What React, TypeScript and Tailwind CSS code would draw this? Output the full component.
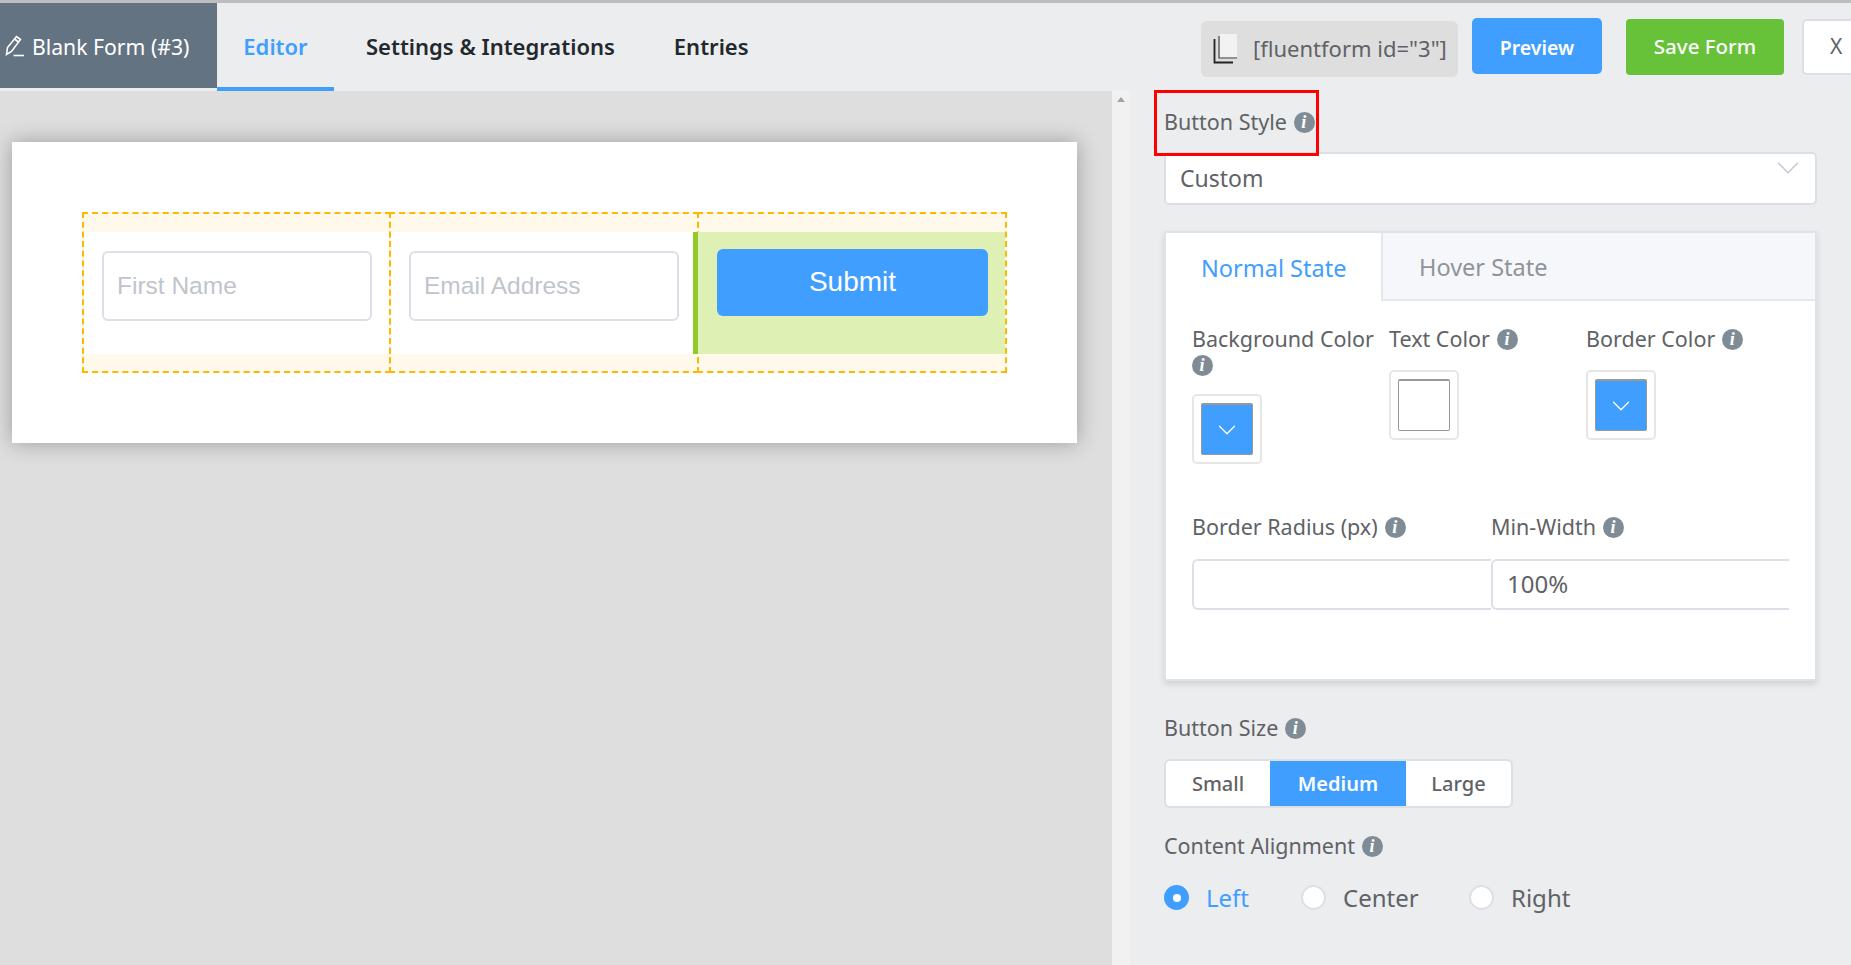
import { ChevronDown } from 'lucide-react'

const uiFont = "font-['Noto_Sans',sans-serif]"

function Info({ className = '' }: { className?: string }) {
  return (
    <span className={`inline-flex h-[21px] w-[21px] shrink-0 items-center justify-center rounded-full bg-[#7f8c96] pr-[1px] font-['Liberation_Serif',serif] text-[18px] font-bold italic leading-none text-white ${className}`}>
      i
    </span>
  )
}

function Label({ text, className = '' }: { text: string; className?: string }) {
  return (
    <div className={`flex items-center gap-[7px] text-[21.5px] leading-[28px] text-[#606266] ${className}`}>
      <span>{text}</span>
      <Info />
    </div>
  )
}

function Swatch({ color, chevron = true }: { color: string; chevron?: boolean }) {
  return (
    <div className="flex h-[70px] w-[70px] items-center justify-center rounded-[5px] border-2 border-[#e6e6e6] bg-white">
      <div className={`flex h-[52px] w-[52px] items-center justify-center rounded-[2px] border border-[#999] border-t-2 ${color}`}>
        {chevron && <ChevronDown className="h-[30px] w-[30px] text-white" strokeWidth={1} />}
      </div>
    </div>
  )
}

function Radio({ label, active = false }: { label: string; active?: boolean }) {
  return (
    <div className="flex items-center gap-[17px]">
      <span className={`flex h-[25px] w-[25px] items-center justify-center rounded-full ${active ? 'bg-[#409eff]' : 'border-2 border-[#dcdfe6] bg-white'}`}>
        {active && <span className="h-[8px] w-[8px] rounded-full bg-white" />}
      </span>
      <span className={`text-[24px] leading-none ${active ? 'text-[#409eff]' : 'text-[#606266]'}`}>{label}</span>
    </div>
  )
}

export default function App() {
  return (
    <div className={`flex h-[965px] w-[1851px] flex-col overflow-hidden bg-[#ecedef] ${uiFont}`}>
      {/* top bar */}
      <header className="flex h-[91px] shrink-0 items-stretch border-t-[3px] border-[#bdbdbd] bg-[#ecedef]">
        <div className="mb-[3px] flex w-[217px] items-center gap-[7px] bg-[#637382] pl-[5px] text-[21.2px] text-white">
          <svg viewBox="0 0 20 24" className="h-[24px] w-[20px]" fill="none" stroke="currentColor" strokeWidth="1.6">
            <path d="M1.5 20.5 2.5 13.5 11.5 2.5 15.5 5.5 6.5 17.5Z" />
            <path d="M9.5 5 13.5 8" />
            <path d="M8.5 21.5H19" />
          </svg>
          <span className="pt-[2px]">Blank Form (#3)</span>
        </div>
        <div className="flex w-[117px] items-center justify-center border-b-4 border-[#409eff] pt-[3px] text-[22px] font-semibold text-[#409eff]">Editor</div>
        <div className="ml-[32px] flex items-center pb-[2px] text-[22px] font-semibold text-[#23282d]">Settings &amp; Integrations</div>
        <div className="ml-[59px] flex items-center pb-[2px] text-[22px] font-semibold text-[#23282d]">Entries</div>
        <div className="ml-auto flex items-center">
          <div className="mt-[4px] flex h-[56px] w-[257px] items-center gap-[14px] rounded-[6px] bg-[#dedede] pb-[1px] pl-[12px] text-[22px] text-[#606266]">
            <svg viewBox="0 0 26 32" className="h-[32px] w-[26px] shrink-0">
              <path d="M7 1H24V24H7Z" fill="#f2f2f2" />
              <path d="M6 3V25H24" fill="none" stroke="#444" strokeWidth="1.2" />
              <path d="M1.5 6V29.5H20" fill="none" stroke="#222" strokeWidth="1.8" />
            </svg>
            <span className="whitespace-nowrap">[fluentform id="3"]</span>
          </div>
          <div className="mb-[2px] ml-[14px] flex h-[56px] w-[130px] items-center justify-center rounded-[5px] bg-[#409eff] pt-[3px] text-[19.5px] font-semibold text-white">Preview</div>
          <div className="ml-[24px] flex h-[56px] w-[158px] items-center justify-center rounded-[4px] bg-[#67c23a] pb-[2px] text-[20.5px] font-medium text-white">Save Form</div>
          <div className="ml-[18px] flex h-[56px] w-[49px] items-center justify-start rounded-l-[5px] border-2 border-r-0 border-[#dcdfe6] bg-white pl-[26px] text-[21px] text-[#606266]">X</div>
        </div>
      </header>

      <div className="flex min-h-0 flex-1">
        {/* canvas */}
        <main className="w-[1112px] shrink-0 bg-[#dedede] pl-[12px] pt-[51px]">
          <div className="h-[301px] w-[1065px] bg-white pl-[70px] pt-[70px] shadow-[0_0_20px_rgba(0,0,0,0.3)]">
            <div className="flex h-[161px] w-[925px] bg-[#fff9eb] font-['Liberation_Sans',sans-serif]">
              <div className="h-full w-[309px] border-2 border-dashed border-[#fdb900]">
                <div className="mt-[18px] h-[122px] bg-white pl-[18px] pt-[19px]">
                  <div className="flex h-[70px] w-[270px] items-center rounded-[6px] border-2 border-[#dcdfe6] bg-white pl-[13px] text-[24.5px] text-[#c0c4cc]">First Name</div>
                </div>
              </div>
              <div className="ml-[-2px] h-full w-[310px] border-2 border-dashed border-[#fdb900]">
                <div className="mt-[18px] h-[122px] bg-white pl-[18px] pt-[19px]">
                  <div className="flex h-[70px] w-[270px] items-center rounded-[6px] border-2 border-[#dcdfe6] bg-white pl-[13px] text-[24.5px] text-[#c0c4cc]">Email Address</div>
                </div>
              </div>
              <div className="ml-[-2px] h-full w-[310px] border-2 border-dashed border-[#fdb900]">
                <div className="ml-[-6px] mt-[18px] h-[122px] border-l-[5px] border-[#95c82a] bg-[#dff0b5] pl-[19px] pt-[17px]">
                  <div className="flex h-[67px] w-[271px] items-center justify-center rounded-[6px] bg-[#409eff] pb-[2px] text-[28px] text-white">Submit</div>
                </div>
              </div>
            </div>
          </div>
        </main>

        {/* scrollbar */}
        <div className="flex w-[18px] shrink-0 justify-center bg-[#f1f1f1] pt-[6px]">
          <svg viewBox="0 0 8 5" className="h-[5px] w-[8px]"><path d="M4 0 8 5H0Z" fill="#a3a3a3" /></svg>
        </div>

        {/* settings panel */}
        <aside className="min-w-0 flex-1 pl-[34px]">
          <div className="relative h-[61px] pt-[17px]">
            <Label text="Button Style" />
            <div className="absolute left-[-10px] top-[-1px] z-10 h-[66px] w-[165px] border-[3px] border-[#ff0000]" />
          </div>
          <div className="relative flex h-[53px] w-[653px] items-center rounded-[5px] border-2 border-[#dcdfe6] bg-white pl-[14px] text-[23px] text-[#606266]">
            Custom
            <ChevronDown className="absolute right-[8px] top-[-5px] h-[38px] w-[38px] text-[#c0c4cc]" strokeWidth={0.8} />
          </div>

          <section className="mt-[26px] h-[450px] w-[653px] border-2 border-[#dfe2e8] bg-white shadow-[0_3px_6px_rgba(0,0,0,0.12)]">
            <div className="flex h-[68px] border-b-2 border-[#e4e7ed] bg-[#f5f7fa] text-[23.5px]">
              <div className="mb-[-2px] flex h-[68px] w-[217px] items-center border-r-2 border-[#e4e7ed] bg-white pl-[35px] pt-[4px] text-[#409eff]">Normal State</div>
              <div className="flex items-center pl-[36px] pt-[4px] text-[#909399]">Hover State</div>
            </div>
            <div className="flex pl-[26px] pt-[24px]">
              <div className="w-[197px]">
                <div className="whitespace-nowrap text-[21.5px] leading-[28px] text-[#606266]">Background Color</div>
                <Info className="mt-[-7px] flex" />
                <div className="mt-[17px]"><Swatch color="bg-[#409eff]" /></div>
              </div>
              <div className="w-[197px]">
                <Label text="Text Color" />
                <div className="mt-[17px]"><Swatch color="bg-white" chevron={false} /></div>
              </div>
              <div>
                <Label text="Border Color" />
                <div className="mt-[17px]"><Swatch color="bg-[#409eff]" /></div>
              </div>
            </div>
            <div className="mt-[49px] flex pl-[26px]">
              <Label text="Border Radius (px)" className="w-[299px]" />
              <Label text="Min-Width" />
            </div>
            <div className="ml-[26px] mt-[18px] flex h-[51px] w-[597px]">
              <div className="w-[299px] rounded-l-[6px] border-2 border-r-0 border-[#dcdfe6]" />
              <div className="flex flex-1 items-center rounded-l-[6px] border-2 border-r-0 border-[#dcdfe6] pb-[2px] pl-[14px] text-[24px] text-[#606266]">100%</div>
            </div>
          </section>

          <Label text="Button Size" className="mt-[33px]" />
          <div className="mt-[17px] flex h-[49px] w-[349px] overflow-hidden rounded-[6px] border-2 border-[#dcdfe6] bg-white text-[20px] font-medium text-[#606266]">
            <div className="flex w-[104px] items-center justify-center pt-[1px]">Small</div>
            <div className="my-[-2px] flex w-[136px] items-center justify-center bg-[#409eff] pt-[1px] font-semibold text-white">Medium</div>
            <div className="flex flex-1 items-center justify-center pt-[1px]">Large</div>
          </div>
          <Label text="Content Alignment" className="mt-[24px]" />
          <div className="mt-[25px] flex">
            <div className="w-[137px]"><Radio label="Left" active /></div>
            <div className="w-[168px]"><Radio label="Center" /></div>
            <Radio label="Right" />
          </div>
        </aside>
      </div>
    </div>
  )
}
